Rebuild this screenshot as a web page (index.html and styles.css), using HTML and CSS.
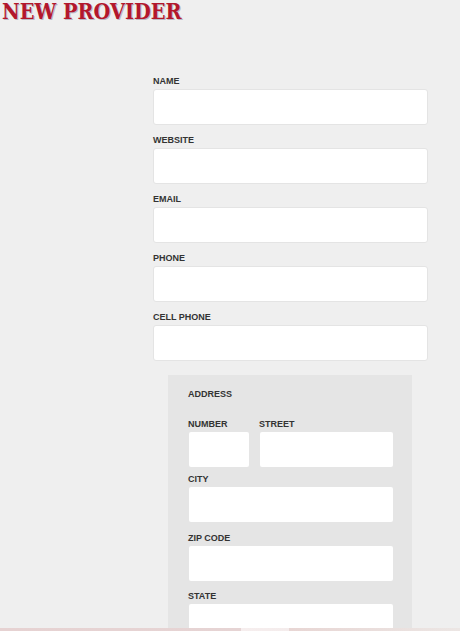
FILE: index.html
```html
<!DOCTYPE html>
<html lang="en">
<head>
    <meta charset="UTF-8">
    <meta name="viewport" content="width=device-width, initial-scale=1.0">
    <title>New Provider</title>
    <link rel="stylesheet" href="styles.css">
</head>
<body>
    <h1 class="page-title">NEW PROVIDER</h1>

    <form class="provider-form">
        <div class="field">
            <label>NAME</label>
            <input type="text">
        </div>
        <div class="field">
            <label>WEBSITE</label>
            <input type="text">
        </div>
        <div class="field">
            <label>EMAIL</label>
            <input type="text">
        </div>
        <div class="field">
            <label>PHONE</label>
            <input type="text">
        </div>
        <div class="field">
            <label>CELL PHONE</label>
            <input type="text">
        </div>

        <!-- address block -->
        <div class="address">
            <div class="address-title">ADDRESS</div>
            <div class="row">
                <div class="field number">
                    <label>NUMBER</label>
                    <input type="text">
                </div>
                <div class="field street">
                    <label>STREET</label>
                    <input type="text">
                </div>
            </div>
            <div class="field">
                <label>CITY</label>
                <input type="text">
            </div>
            <div class="field">
                <label>ZIP CODE</label>
                <input type="text">
            </div>
            <div class="field">
                <label>STATE</label>
                <input type="text">
            </div>
        </div>
    </form>

    <div class="footer-strip"></div>
</body>
</html>
```

FILE: styles.css
```css
* {
    margin: 0;
    padding: 0;
    box-sizing: border-box;
}

body {
    background: #efefef;
    font-family: "Liberation Sans", Arial, sans-serif;
    color: #333;
}

.page-title {
    font-family: "DejaVu Serif Condensed", "DejaVu Serif", serif;
    font-weight: bold;
    font-size: 21.5px;
    line-height: 24px;
    color: #b3172c;
    text-shadow: 1px 1px 0 #b9b9c4;
    padding: 0 0 0 2px;
}

/* form column */
.provider-form {
    width: 275px;
    margin: 52px 0 0 153px;
}

.field {
    margin-bottom: 10px;
}

.field label {
    display: block;
    font-size: 9px;
    font-weight: bold;
    line-height: 11px;
    margin-bottom: 2px;
}

.field input {
    display: block;
    width: 100%;
    height: 36px;
    border: 1px solid #e4e4e4;
    border-radius: 3px;
    background: #fff;
}

/* address */
.address {
    background: #e5e5e5;
    margin: 14px 16px 0 15px;
    padding: 14px 19px 20px 20px;
}

.address-title {
    font-size: 9px;
    font-weight: bold;
    line-height: 11px;
    margin-bottom: 19px;
}

.address .field {
    margin-bottom: 10.5px;
}

.address .field input {
    border: none;
    height: 35px;
    border-radius: 2px;
    margin-left: 1px;
    width: calc(100% - 1px);
}

.row {
    display: flex;
    gap: 10px;
}

.address .row .field {
    margin-bottom: 7px;
}

.row .number {
    width: 61px;
}

.row .street {
    flex: 1;
}

.footer-strip {
    position: fixed;
    left: 0;
    right: 0;
    bottom: 0;
    height: 3px;
    background: linear-gradient(to right, #e6d2d2 0, #e6d4d4 241px, #f6eeee 241px, #f4ecec 289px, #e8d6d4 289px, #ece6e4 100%);
}
```
